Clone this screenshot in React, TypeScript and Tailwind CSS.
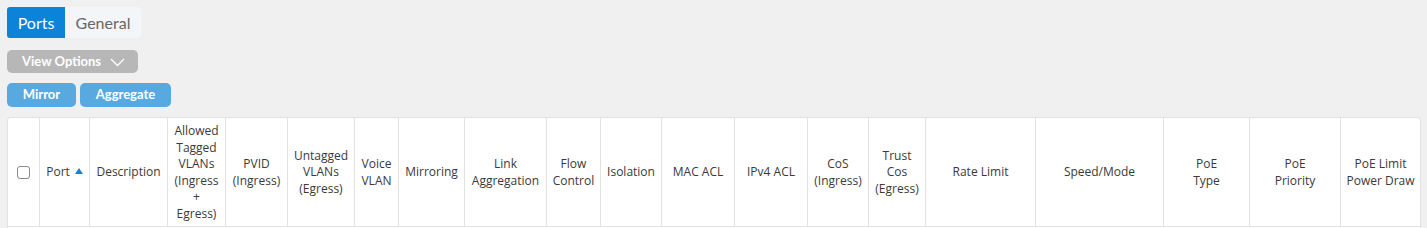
const COLUMNS: { label: string[]; width: number }[] = [
  { label: [], width: 31 },
  { label: ["Port"], width: 50 },
  { label: ["Description"], width: 78 },
  { label: ["Allowed", "Tagged", "VLANs", "(Ingress", "+", "Egress)"], width: 58 },
  { label: ["PVID", "(Ingress)"], width: 62 },
  { label: ["Untagged", "VLANs", "(Egress)"], width: 67 },
  { label: ["Voice", "VLAN"], width: 44 },
  { label: ["Mirroring"], width: 66 },
  { label: ["Link", "Aggregation"], width: 82 },
  { label: ["Flow", "Control"], width: 54 },
  { label: ["Isolation"], width: 61 },
  { label: ["MAC ACL"], width: 73 },
  { label: ["IPv4 ACL"], width: 73 },
  { label: ["CoS", "(Ingress)"], width: 61 },
  { label: ["Trust", "Cos", "(Egress)"], width: 57 },
  { label: ["Rate Limit"], width: 110 },
  { label: ["Speed/Mode"], width: 128 },
  { label: ["PoE", "Type"], width: 86 },
  { label: ["PoE", "Priority"], width: 91 },
  { label: ["PoE Limit", "Power Draw"], width: 80 },
];

function HeaderCell({ label, index }: { label: string[]; index: number }) {
  if (index === 0) {
    return (
      <div className="flex items-center justify-center">
        <span className="block h-[13px] w-[13px] rounded-[3px] border border-[#8a8a8a] bg-white" />
      </div>
    );
  }
  return (
    <div className="flex items-center justify-center border-l border-[#e2e2e2] px-1 pt-px text-center">
      <div className="text-[12px] leading-[16.5px] text-[#3a3a3a]">
        {label.map((l, i) => (
          <div key={i} className="whitespace-nowrap">
            {l}
            {index === 1 && (
              <span className="ml-[5px] inline-block h-0 w-0 -translate-y-[2px] border-x-[4px] border-b-[6px] border-x-transparent border-b-[#1b80d2] align-middle" />
            )}
          </div>
        ))}
      </div>
    </div>
  );
}

export default function App() {
  return (
    <div
      className="h-[228px] overflow-hidden bg-[#f0f0f0] px-[7px] pt-[7px]"
      style={{ fontFamily: "Lato, 'Open Sans', sans-serif" }}
    >
      <div className="flex">
        <div className="flex h-[31px] overflow-hidden rounded-[3px]">
          <button className="w-[58px] bg-[#0b83d8] text-[16px] text-white">Ports</button>
          <button className="w-[76px] bg-[#f3f5f8] text-[16px] text-[#666]">General</button>
        </div>
      </div>

      <div className="mt-[12px] flex">
        <button className="flex h-[23px] w-[131px] items-center gap-[9px] rounded-[5px] bg-[#b7b7b7] pl-[15px] text-[13px] font-bold text-white">
          View Options
          <svg width="15" height="9" viewBox="0 0 15 9" fill="none" className="mt-px">
            <polyline points="1,1 7.5,7.5 14,1" stroke="white" strokeWidth="1.3" />
          </svg>
        </button>
      </div>

      <div className="mt-[10px] flex gap-[4px]">
        <button className="h-[24px] w-[69px] rounded-[5px] bg-[#57a9e0] text-[13px] font-bold text-white">
          Mirror
        </button>
        <button className="h-[24px] w-[91px] rounded-[5px] bg-[#57a9e0] text-[13px] font-bold text-white">
          Aggregate
        </button>
      </div>

      <div
        className="mt-[10px] w-[1414px] overflow-hidden rounded-t-[4px] border border-b-0 border-[#e2e2e2] bg-white"
        style={{ fontFamily: "'Open Sans', sans-serif" }}
      >
        <div
          className="grid h-[109px] border-b border-[#e2e2e2]"
          style={{ gridTemplateColumns: COLUMNS.map((c) => `${c.width}px`).join(" ") }}
        >
          {COLUMNS.map((c, i) => (
            <HeaderCell key={i} label={c.label} index={i} />
          ))}
        </div>
        <div className="h-[20px] bg-white" />
      </div>
    </div>
  );
}
